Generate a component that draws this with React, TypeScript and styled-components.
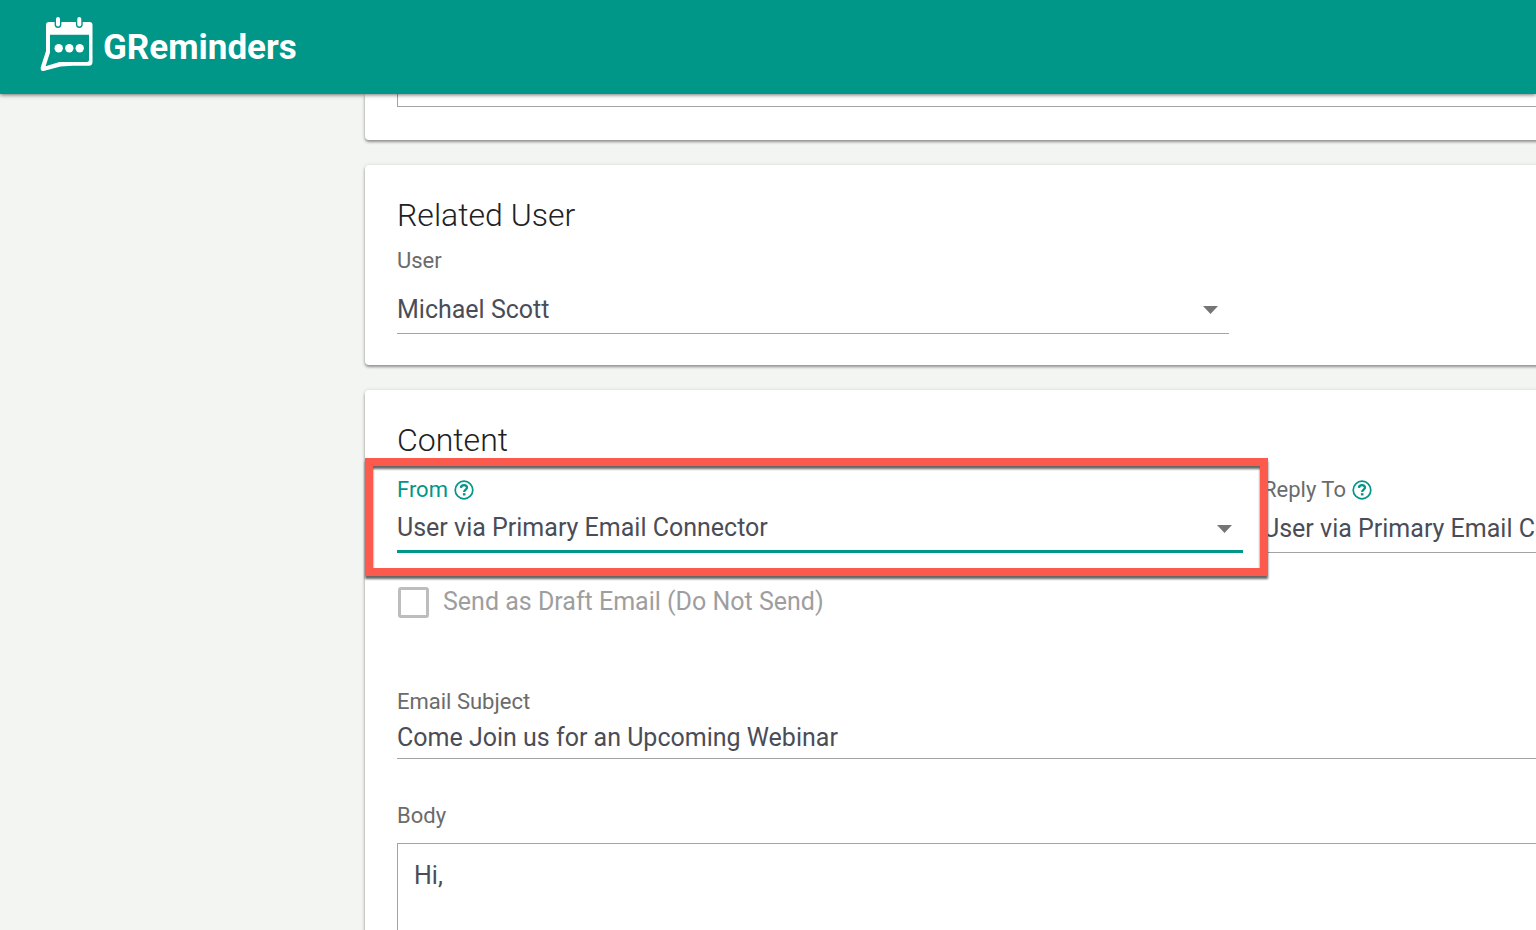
import React from "react";
import styled, { createGlobalStyle, css } from "styled-components";

const teal = "#009688";
const ink = "#4a4d57";
const muted = "#6b6b6b";
const line = "#a3a3a3";

const GlobalStyle = createGlobalStyle`
  *, *::before, *::after { box-sizing: border-box; }
  body { margin: 0; background: #f3f5f2; font-family: Roboto, "Liberation Sans", sans-serif; }
`;

const Page = styled.div`
  height: 100vh;
  overflow: hidden;
  display: flex;
  flex-direction: column;
`;

const Header = styled.header`
  flex: none;
  height: 94px;
  padding: 16px 40px 0;
  display: flex;
  align-items: flex-start;
  background: ${teal};
  box-shadow: 0 1px 4px rgba(0, 0, 0, 0.55);
  position: relative;
  z-index: 2;
`;

const Brand = styled.a`
  display: flex;
  align-items: flex-start;
  gap: 8px;
  color: #fff;
  font-size: 35px;
  line-height: 56px;
  font-weight: 700;
  text-decoration: none;
`;

const BrandName = styled.span`
  padding-top: 4px;
`;

const Main = styled.main`
  flex: 1;
  min-height: 0;
  margin: 0 -605px 0 365px;
  display: flex;
  flex-direction: column;
  gap: 25px;
`;

const Card = styled.section<{ $continued?: boolean }>`
  flex: none;
  padding: ${(p) => (p.$continued ? "0 32px 33px" : "30px 32px 31px")};
  background: #fff;
  border-radius: ${(p) => (p.$continued ? "0 0 4px 4px" : "4px")};
  box-shadow: 0 2px 3px rgba(0, 0, 0, 0.38), 0 0 4px rgba(0, 0, 0, 0.1);
`;

const Heading = styled.h2<{ $gap: number }>`
  margin: 0 0 ${(p) => p.$gap}px;
  color: #212121;
  font-size: 32px;
  line-height: 40px;
  font-weight: 300;
`;

const Columns = styled.div<{ $gap: number }>`
  display: grid;
  grid-template-columns: 1fr 1fr;
  gap: ${(p) => p.$gap}px;
`;

const Field = styled.div<{ $top?: number }>`
  position: relative;
  margin-top: ${(p) => p.$top ?? 0}px;
  display: flex;
  flex-direction: column;
`;

const LabelRow = styled.div<{ $gap?: number }>`
  display: flex;
  align-items: center;
  gap: 6px;
  margin-bottom: ${(p) => p.$gap ?? 0}px;
`;

const Label = styled.label<{ $active?: boolean }>`
  color: ${(p) => (p.$active ? teal : muted)};
  font-size: 22px;
  line-height: 28px;
`;

const HelpButton = styled.button`
  display: flex;
  padding: 0;
  border: 0;
  background: none;
  color: ${teal};
  cursor: pointer;
`;

const control = css`
  width: 100%;
  margin: 0;
  padding: 0;
  border: 0;
  border-radius: 0;
  outline: 0;
  background: transparent;
  color: ${ink};
  font-family: inherit;
  font-size: 25px;
`;

const SelectWrap = styled.div`
  display: grid;
  align-items: center;
  & > * { grid-area: 1 / 1; }
`;

const Select = styled.select<{ $active?: boolean }>`
  ${control}
  appearance: none;
  height: 49px;
  border-bottom: ${(p) => (p.$active ? `3px solid ${teal}` : `1px solid ${line}`)};
`;

const Arrow = styled.svg`
  justify-self: end;
  margin-right: 11px;
  pointer-events: none;
`;

const TextInput = styled.input`
  ${control}
  height: 43px;
  border-bottom: 1px solid ${line};
`;

const Editor = styled.textarea`
  ${control}
  display: block;
  height: 320px;
  padding: 16px;
  border: 1px solid ${line};
  line-height: 32px;
  resize: none;
`;

const EditorEnd = styled(Editor)`
  height: 13px;
  padding: 0;
  border-top: 0;
`;

const Highlight = styled.div`
  position: absolute;
  inset: -18px -25px -23px -32px;
  border: 8px solid #fc5a4c;
  filter: drop-shadow(0 3px 1px rgba(0, 0, 0, 0.6));
  pointer-events: none;
  z-index: 1;
`;

const CheckRow = styled.label`
  margin-top: 31px;
  display: flex;
  align-items: center;
  gap: 14px;
  color: #9e9e9e;
  font-size: 25px;
  line-height: 36px;
`;

const Checkbox = styled.input`
  appearance: none;
  width: 31px;
  height: 31px;
  margin: 0 0 0 1px;
  border: 3px solid #bdbdbd;
  border-radius: 3px;
`;

function LogoMark() {
  return (
    <svg width="55" height="56" viewBox="0 0 55 56" aria-hidden="true">
      <path
        fill="#fff"
        fillRule="evenodd"
        d="M9 6H49.500Q52.500 6 52.500 9V46Q52.500 49.700 49 49.700H33L20.500 50.500L4.500 54.800Q.2 56 .7 51.500L6 35V9Q6 6 9 6ZM10 18.700V36.500L5.600 50.200L19.500 46H47Q49 46 49 44V18.700Z"
      />
      <g stroke={teal} strokeWidth="6.800" strokeLinecap="round">
        <path d="M18 3.500V8.500M39.300 3.500V8.500" />
      </g>
      <g stroke="#fff" strokeWidth="4" strokeLinecap="round">
        <path d="M18 3V8.500M39.300 3V8.500" />
      </g>
      <g fill="#fff">
        <circle cx="18.700" cy="32.300" r="4.200" />
        <circle cx="29.300" cy="32.300" r="4.200" />
        <circle cx="39.700" cy="32.300" r="4.200" />
      </g>
    </svg>
  );
}

function Help({ topic }: { topic: string }) {
  return (
    <HelpButton type="button" aria-label={`Help: ${topic}`}>
      <svg width="20" height="20" viewBox="0 0 20 20" fill="none" stroke="currentColor">
        <circle cx="10" cy="10" r="8.800" strokeWidth="1.700" />
        <path d="M6.900 7.800C7.200 4.300 13 4.400 13 7.600C13 9.700 10.200 9.600 10.200 12" strokeWidth="2.300" />
        <path d="M8.900 14.300H11.500" strokeWidth="2.300" />
      </svg>
    </HelpButton>
  );
}

type DropdownProps = { id: string; value: string; active?: boolean };

function Dropdown({ id, value, active }: DropdownProps) {
  return (
    <SelectWrap>
      <Select id={id} $active={active} defaultValue={value}>
        <option>{value}</option>
      </Select>
      <Arrow width="15" height="8" viewBox="0 0 15 8" aria-hidden="true">
        <path d="M0 0H15L7.500 8Z" fill="#757575" />
      </Arrow>
    </SelectWrap>
  );
}

export default function App() {
  return (
    <Page>
      <GlobalStyle />
      <Header>
        <Brand href="#">
          <LogoMark />
          <BrandName>GReminders</BrandName>
        </Brand>
      </Header>
      <Main>
        <Card $continued>
          <EditorEnd aria-label="Notes" />
        </Card>

        <Card>
          <Heading $gap={12}>Related User</Heading>
          <Columns $gap={48}>
            <Field>
              <LabelRow $gap={10}>
                <Label htmlFor="user">User</Label>
              </LabelRow>
              <Dropdown id="user" value="Michael Scott" />
            </Field>
          </Columns>
        </Card>

        <Card>
          <Heading $gap={16}>Content</Heading>
          <Columns $gap={20}>
            <Field>
              <LabelRow>
                <Label htmlFor="from" $active>From</Label>
                <Help topic="From" />
              </LabelRow>
              <Dropdown id="from" value="User via Primary Email Connector" active />
              <Highlight />
            </Field>
            <Field>
              <LabelRow>
                <Label htmlFor="reply">Reply To</Label>
                <Help topic="Reply To" />
              </LabelRow>
              <Dropdown id="reply" value="User via Primary Email Connector" />
            </Field>
          </Columns>
          <CheckRow>
            <Checkbox type="checkbox" disabled />
            Send as Draft Email (Do Not Send)
          </CheckRow>
          <Field $top={68}>
            <Label htmlFor="subject">Email Subject</Label>
            <TextInput id="subject" defaultValue="Come Join us for an Upcoming Webinar" />
          </Field>
          <Field $top={43}>
            <LabelRow $gap={13}>
              <Label htmlFor="body">Body</Label>
            </LabelRow>
            <Editor id="body" defaultValue="Hi," />
          </Field>
        </Card>
      </Main>
    </Page>
  );
}
